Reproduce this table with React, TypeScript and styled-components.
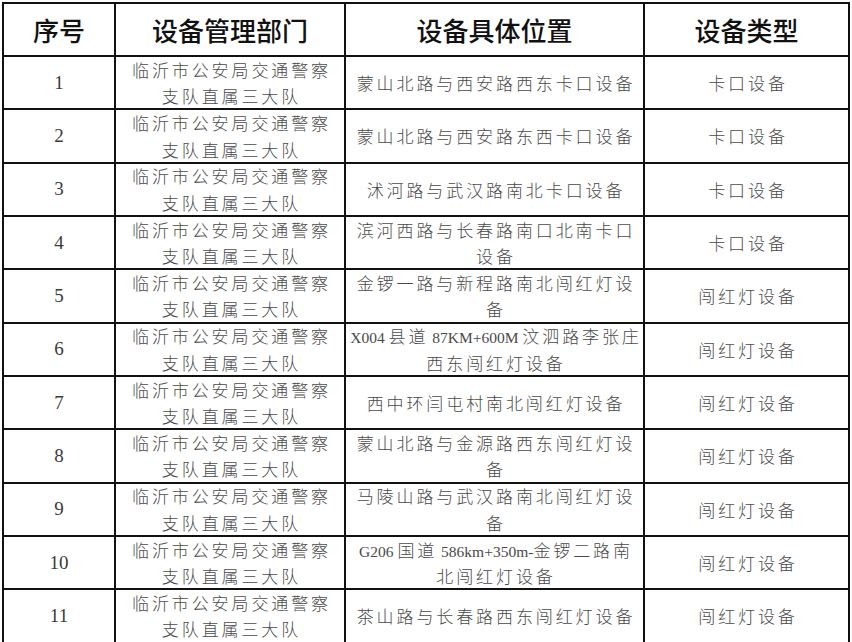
import React from "react";
import styled, { createGlobalStyle } from "styled-components";

const GlobalStyle = createGlobalStyle`
  html, body {
    margin: 0;
    padding: 0;
    background: #ffffff;
  }
  body {
    font-family: "Liberation Serif", "Noto Sans CJK SC", serif;
  }
`;

const Page = styled.div`
  padding: 2px 0 0 2px;
  width: 852px;
  height: 642px;
  overflow: hidden;
  box-sizing: border-box;
`;

const Grid = styled.div`
  display: grid;
  grid-template-columns: 112px 230px 299px 205px;
  grid-template-rows: 53px;
  grid-auto-rows: 53.33px;
  border-left: 2px solid #111;
  border-top: 2px solid #111;
  width: max-content;
`;

const Cell = styled.div`
  box-sizing: border-box;
  border-right: 2px solid #111;
  border-bottom: 2px solid #111;
  display: flex;
  flex-direction: column;
  align-items: center;
  justify-content: center;
  min-width: 0;
`;

const HeadCell = styled(Cell)`
  font-family: "Noto Sans CJK SC", sans-serif;
  font-size: 26px;
  font-weight: 500;
  color: #111;
  line-height: 1;
`;

const BodyCell = styled(Cell)`
  font-family: "Liberation Serif", "Noto Sans CJK SC", serif;
  font-size: 17px;
  font-weight: 300;
  color: #4a4a4a;
  letter-spacing: 2.9px;
  line-height: 26.5px;
  padding-left: 3px;
  padding-top: 5px;
`;

const NumCell = styled(Cell)`
  font-family: "Liberation Serif", serif;
  font-size: 19px;
  color: #3a3a3a;
`;

const Line = styled.span`
  white-space: nowrap;
`;

const Latin = styled.span`
  font-family: "Liberation Serif", serif;
  font-size: 15.5px;
  letter-spacing: 0;
`;

type Row = {
  no: number;
  place: React.ReactNode[];
  kind: string;
};

const dept = ["临沂市公安局交通警察", "支队直属三大队"];

const rows: Row[] = [
  { no: 1, place: ["蒙山北路与西安路西东卡口设备"], kind: "卡口设备" },
  { no: 2, place: ["蒙山北路与西安路东西卡口设备"], kind: "卡口设备" },
  { no: 3, place: ["沭河路与武汉路南北卡口设备"], kind: "卡口设备" },
  { no: 4, place: ["滨河西路与长春路南口北南卡口", "设备"], kind: "卡口设备" },
  { no: 5, place: ["金锣一路与新程路南北闯红灯设", "备"], kind: "闯红灯设备" },
  {
    no: 6,
    place: [
      <>
        <Latin>X004 </Latin>县道<Latin> 87KM+600M </Latin>汶泗路李张庄
      </>,
      "西东闯红灯设备",
    ],
    kind: "闯红灯设备",
  },
  { no: 7, place: ["西中环闫屯村南北闯红灯设备"], kind: "闯红灯设备" },
  { no: 8, place: ["蒙山北路与金源路西东闯红灯设", "备"], kind: "闯红灯设备" },
  { no: 9, place: ["马陵山路与武汉路南北闯红灯设", "备"], kind: "闯红灯设备" },
  {
    no: 10,
    place: [
      <>
        <Latin>G206 </Latin>国道<Latin> 586km+350m-</Latin>金锣二路南
      </>,
      "北闯红灯设备",
    ],
    kind: "闯红灯设备",
  },
  { no: 11, place: ["茶山路与长春路西东闯红灯设备"], kind: "闯红灯设备" },
];

export default function App() {
  return (
    <>
      <GlobalStyle />
      <Page>
        <Grid>
          <HeadCell>序号</HeadCell>
          <HeadCell>设备管理部门</HeadCell>
          <HeadCell>设备具体位置</HeadCell>
          <HeadCell>设备类型</HeadCell>
          {rows.map((r) => (
            <React.Fragment key={r.no}>
              <NumCell>{r.no}</NumCell>
              <BodyCell>
                {dept.map((l, i) => (
                  <Line key={i}>{l}</Line>
                ))}
              </BodyCell>
              <BodyCell>
                {r.place.map((l, i) => (
                  <Line key={i}>{l}</Line>
                ))}
              </BodyCell>
              <BodyCell>
                <Line>{r.kind}</Line>
              </BodyCell>
            </React.Fragment>
          ))}
        </Grid>
      </Page>
    </>
  );
}
